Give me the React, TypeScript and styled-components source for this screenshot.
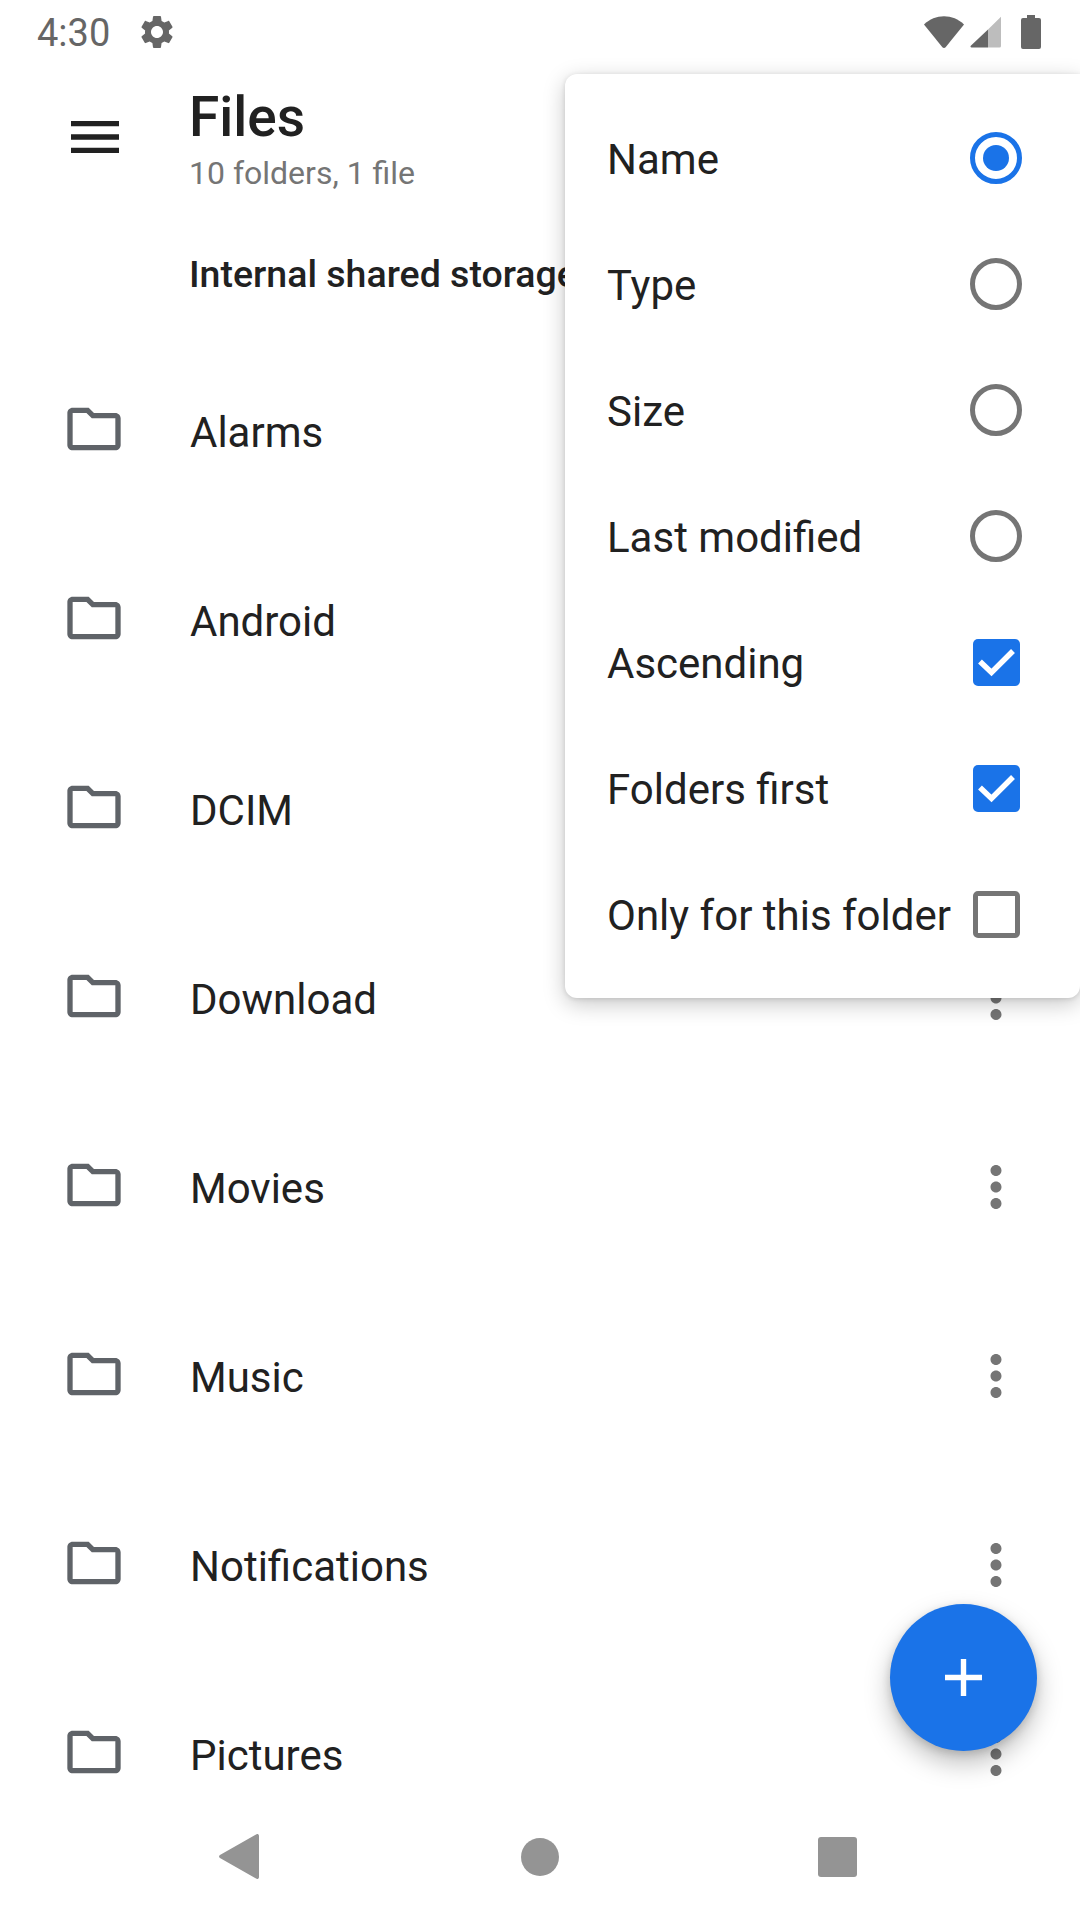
import { createGlobalStyle, styled } from "styled-components";

const GlobalStyle = createGlobalStyle`
    html, body {
        margin: 0;
        padding: 0;
        background: #ffffff;
    }
    * {
        box-sizing: border-box;
    }
`;

const BLUE = "#1a73e8";

const Page = styled.main`
    position: relative;
    display: flex;
    flex-direction: column;
    width: 1080px;
    height: 1920px;
    overflow: hidden;
    background: #ffffff;
    font-family: Roboto, "Liberation Sans", sans-serif;
    color: #202124;
`;

const StatusBar = styled.div`
    display: flex;
    align-items: center;
    flex: none;
    height: 64px;
    padding: 0 39px 0 37px;
    color: #666666;
`;

const Clock = styled.span`
    font-size: 38px;
    line-height: 1;
    padding-top: 2px;
    margin-right: 27px;
`;

const StatusIcons = styled.div`
    display: flex;
    align-items: center;
    margin-left: auto;
`;

const AppBar = styled.header`
    display: flex;
    align-items: center;
    flex: none;
    height: 146px;
    padding-left: 63px;
`;

const TitleBlock = styled.div`
    display: flex;
    flex-direction: column;
    margin-left: 62px;
    padding-top: 5px;
`;

const Title = styled.h1`
    margin: 0;
    font-size: 55px;
    line-height: 64px;
    font-weight: 500;
    color: #212121;
`;

const Subtitle = styled.span`
    margin-top: 2px;
    font-size: 32px;
    line-height: 44px;
    color: #757575;
`;

const Breadcrumb = styled.div`
    flex: none;
    height: 126px;
    padding: 16px 0 0 189px;
    font-size: 37.5px;
    line-height: 96px;
    font-weight: 500;
    color: #212121;
    white-space: nowrap;
`;

const FolderList = styled.ul`
    flex: 1;
    margin: 0;
    padding: 0;
    list-style: none;
    overflow: hidden;
`;

const FolderRow = styled.li`
    display: flex;
    align-items: center;
    height: 189px;
    padding: 0 51px 0 62px;
`;

const FolderGlyph = styled.svg`
    flex: none;
    margin-bottom: 3px;
`;

const FolderName = styled.span`
    flex: 1;
    margin: 3px 0 0 64px;
    font-size: 42px;
    color: #212121;
`;

const NavBar = styled.nav`
    display: flex;
    align-items: center;
    justify-content: center;
    flex: none;
    height: 132px;
    padding-top: 5px;
    background: #ffffff;
`;

const NavSlot = styled.div<{ $shift?: number }>`
    display: flex;
    justify-content: center;
    width: 299px;
    padding-right: ${(p) => p.$shift ?? 0}px;
`;

const Menu = styled.div`
    position: absolute;
    top: 74px;
    right: 0;
    width: 515px;
    padding: 21px 58px 21px 42px;
    background: #ffffff;
    border-radius: 12px 0 12px 12px;
    box-shadow: 0 6px 22px rgba(0, 0, 0, 0.22), 0 1px 5px rgba(0, 0, 0, 0.12);
`;

const MenuRow = styled.div`
    display: flex;
    align-items: center;
    justify-content: space-between;
    height: 126px;
    font-size: 42px;
    color: #212121;
    white-space: nowrap;
`;

const MenuLabel = styled.span`
    padding-top: 2px;
`;

const Control = styled.div`
    display: flex;
    align-items: center;
    justify-content: center;
    flex: none;
    width: 52px;
    height: 52px;
`;

const Radio = styled.div<{ $on?: boolean }>`
    display: flex;
    align-items: center;
    justify-content: center;
    width: 52px;
    height: 52px;
    border-radius: 50%;
    border: 5px solid ${(p) => (p.$on ? BLUE : "#757575")};

    &::after {
        content: "";
        display: ${(p) => (p.$on ? "block" : "none")};
        width: 26px;
        height: 26px;
        border-radius: 50%;
        background: ${BLUE};
    }
`;

const Checkbox = styled.div<{ $on?: boolean }>`
    display: flex;
    align-items: center;
    justify-content: center;
    width: 47px;
    height: 47px;
    border-radius: 5px;
    background: ${(p) => (p.$on ? BLUE : "transparent")};
    border: ${(p) => (p.$on ? "none" : "5px solid #757575")};
`;

const Fab = styled.button`
    position: absolute;
    top: 1604px;
    left: 890px;
    display: flex;
    align-items: center;
    justify-content: center;
    width: 147px;
    height: 147px;
    padding: 0;
    border: none;
    border-radius: 50%;
    background: ${BLUE};
    box-shadow: 0 12px 26px rgba(0, 0, 0, 0.26), 0 3px 8px rgba(0, 0, 0, 0.14);
`;

function SettingsIcon() {
    return (
        <svg width="40" height="40" viewBox="0 0 24 24" fill="#666666">
            <path d="M19.14 12.94c.04-.3.06-.61.06-.94 0-.32-.02-.64-.07-.94l2.03-1.58c.18-.14.23-.41.12-.61l-1.92-3.32c-.12-.22-.37-.29-.59-.22l-2.39.96c-.5-.38-1.03-.7-1.62-.94l-.36-2.54c-.04-.24-.24-.41-.48-.41h-3.84c-.24 0-.43.17-.47.41l-.36 2.54c-.59.24-1.13.57-1.62.94l-2.39-.96c-.22-.08-.47 0-.59.22L2.74 8.87c-.12.21-.08.47.12.61l2.03 1.58c-.05.3-.09.63-.09.94s.02.64.07.94l-2.03 1.58c-.18.14-.23.41-.12.61l1.92 3.32c.12.22.37.29.59.22l2.39-.96c.5.38 1.03.7 1.62.94l.36 2.54c.05.24.24.41.48.41h3.84c.24 0 .44-.17.47-.41l.36-2.54c.59-.24 1.13-.56 1.62-.94l2.39.96c.22.08.47 0 .59-.22l1.92-3.32c.12-.22.07-.47-.12-.61l-2.01-1.58zM12 15.6c-1.98 0-3.6-1.62-3.6-3.6s1.62-3.6 3.6-3.6 3.6 1.62 3.6 3.6-1.62 3.6-3.6 3.6z" />
        </svg>
    );
}

function WifiIcon() {
    return (
        <svg width="42" height="34" viewBox="0 0 42 34" fill="#666666">
            <path d="M1 9.5C12-1.5 30-1.5 41 9.5L22.6 32.2c-.9 1.1-2.3 1.1-3.2 0z" />
        </svg>
    );
}

function SignalIcon() {
    return (
        <svg width="32" height="32" viewBox="0 0 32 32" style={{ marginLeft: 5 }}>
            <path d="M18 13.5L31 .8V30a1.5 1.5 0 0 1-1.5 1.5H18z" fill="#bdbdbd" />
            <path d="M18 13.5V31.5H1.5c-1 0-1.4-1-.7-1.7z" fill="#666666" />
        </svg>
    );
}

function BatteryIcon() {
    return (
        <svg width="20" height="34" viewBox="0 0 20 34" fill="#666666" style={{ marginLeft: 19 }}>
            <path d="M6 0h8v3h4a2 2 0 0 1 2 2v27a2 2 0 0 1-2 2H2a2 2 0 0 1-2-2V5a2 2 0 0 1 2-2h4z" />
        </svg>
    );
}

function MenuIcon() {
    return (
        <svg width="64" height="64" viewBox="0 0 24 24" fill="#212121">
            <path d="M3 18h18v-2H3v2zm0-5h18v-2H3v2zm0-5h18V6H3v2z" />
        </svg>
    );
}

function FolderIcon() {
    return (
        <FolderGlyph width="64" height="64" viewBox="0 0 24 24" fill="#5f6368">
            <path d="M9.17 6l2 2H20v10H4V6h5.17M10 4H4c-1.1 0-1.99.9-1.99 2L2 18c0 1.1.9 2 2 2h16c1.1 0 2-.9 2-2V8c0-1.1-.9-2-2-2h-8l-2-2z" />
        </FolderGlyph>
    );
}

function MoreIcon() {
    return (
        <svg width="66" height="66" viewBox="0 0 24 24" fill="#757575">
            <path d="M12 8c1.1 0 2-.9 2-2s-.9-2-2-2-2 .9-2 2 .9 2 2 2zm0 2c-1.1 0-2 .9-2 2s.9 2 2 2 2-.9 2-2-.9-2-2-2zm0 6c-1.1 0-2 .9-2 2s.9 2 2 2 2-.9 2-2-.9-2-2-2z" />
        </svg>
    );
}

function TickIcon() {
    return (
        <svg width="47" height="47" viewBox="0 0 47 47" fill="none" stroke="#ffffff" strokeWidth="5.5">
            <path d="M7 22.5L18.5 33.5L40 12" />
        </svg>
    );
}

function PlusIcon() {
    return (
        <svg width="37" height="37" viewBox="0 0 37 37" fill="#ffffff">
            <path d="M15.8 0h5.4v15.8H37v5.4H21.2V37h-5.4V21.2H0v-5.4h15.8z" />
        </svg>
    );
}

const folders = ["Alarms", "Android", "DCIM", "Download", "Movies", "Music", "Notifications", "Pictures"];

const sortOptions = [
    { label: "Name", kind: "radio", on: true },
    { label: "Type", kind: "radio", on: false },
    { label: "Size", kind: "radio", on: false },
    { label: "Last modified", kind: "radio", on: false },
    { label: "Ascending", kind: "check", on: true },
    { label: "Folders first", kind: "check", on: true },
    { label: "Only for this folder", kind: "check", on: false },
];

export default function App() {
    return (
        <Page>
            <GlobalStyle />
            <StatusBar>
                <Clock>4:30</Clock>
                <SettingsIcon />
                <StatusIcons>
                    <WifiIcon />
                    <SignalIcon />
                    <BatteryIcon />
                </StatusIcons>
            </StatusBar>

            <AppBar>
                <MenuIcon />
                <TitleBlock>
                    <Title>Files</Title>
                    <Subtitle>10 folders, 1 file</Subtitle>
                </TitleBlock>
            </AppBar>

            <Breadcrumb>Internal shared storage</Breadcrumb>

            <FolderList>
                {folders.map((name) => (
                    <FolderRow key={name}>
                        <FolderIcon />
                        <FolderName>{name}</FolderName>
                        <MoreIcon />
                    </FolderRow>
                ))}
            </FolderList>

            <NavBar>
                <NavSlot $shift={4}>
                    <svg width="40" height="45" viewBox="0 0 42 46" fill="#949494" preserveAspectRatio="none">
                        <path d="M39 .4c1.4-1 3-.2 3 1.6v42c0 1.8-1.6 2.6-3 1.6L1 24.6c-1.3-.8-1.3-2.4 0-3.2z" />
                    </svg>
                </NavSlot>
                <NavSlot>
                    <svg width="38" height="38" viewBox="0 0 38 38" fill="#949494">
                        <circle cx="19" cy="19" r="19" />
                    </svg>
                </NavSlot>
                <NavSlot $shift={4}>
                    <svg width="39" height="40" viewBox="0 0 39 40" fill="#949494">
                        <rect width="39" height="40" rx="3" />
                    </svg>
                </NavSlot>
            </NavBar>

            <Menu>
                {sortOptions.map((opt) => (
                    <MenuRow key={opt.label}>
                        <MenuLabel>{opt.label}</MenuLabel>
                        <Control>
                            {opt.kind === "radio" ? (
                                <Radio $on={opt.on} />
                            ) : (
                                <Checkbox $on={opt.on}>{opt.on && <TickIcon />}</Checkbox>
                            )}
                        </Control>
                    </MenuRow>
                ))}
            </Menu>

            <Fab aria-label="Add">
                <PlusIcon />
            </Fab>
        </Page>
    );
}
